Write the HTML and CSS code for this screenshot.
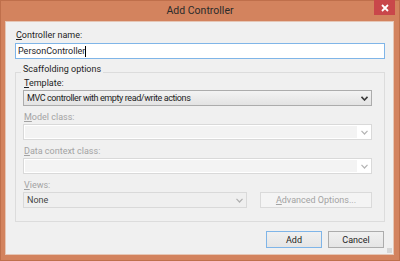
FILE: index.html
```html
<!DOCTYPE html>
<html lang="en">
  <head>
    <meta charset="UTF-8" />
    <title>Add Controller</title>
    <link rel="stylesheet" href="styles.css">
  </head>
  <body>
    <div class="window">
      <div class="titlebar">
        <span class="title">Add Controller</span>
        <span class="close">
          <svg width="8" height="8" viewBox="0 0 8 8">
            <path d="M1 1 L7 7 M7 1 L1 7" stroke="#ffffff" stroke-width="1.8" />
          </svg>
        </span>
      </div>

      <div class="client">
        <div class="label"><u>C</u>ontroller name:</div>
        <div class="textbox">PersonController<span class="caret"></span></div>

        <div class="group">
          <div class="group-title">Scaffolding options</div>

          <div class="label"><u>T</u>emplate:</div>
          <div class="combo">
            <span class="combo-text tight">MVC controller with empty read/write actions</span>
            <span class="arrow">
              <svg width="7" height="5" viewBox="0 0 7 5">
                <path d="M0.5 0.8 L3.5 4 L6.5 0.8" fill="none" stroke="#3a3a3a" stroke-width="1.6" />
              </svg>
            </span>
          </div>

          <div class="label disabled"><u>M</u>odel class:</div>
          <div class="combo off">
            <span class="combo-text"></span>
            <span class="arrow">
              <svg width="7" height="5" viewBox="0 0 7 5">
                <path d="M0.5 0.8 L3.5 4 L6.5 0.8" fill="none" stroke="#b5b5b5" stroke-width="1.2" />
              </svg>
            </span>
          </div>

          <div class="label disabled"><u>D</u>ata context class:</div>
          <div class="combo off">
            <span class="combo-text"></span>
            <span class="arrow">
              <svg width="7" height="5" viewBox="0 0 7 5">
                <path d="M0.5 0.8 L3.5 4 L6.5 0.8" fill="none" stroke="#b5b5b5" stroke-width="1.2" />
              </svg>
            </span>
          </div>

          <div class="label disabled"><u>V</u>iews:</div>
          <div class="views-row">
            <div class="combo list">
              <span class="combo-text">None</span>
              <span class="arrow">
                <svg width="7" height="5" viewBox="0 0 7 5">
                  <path d="M0.5 0.8 L3.5 4 L6.5 0.8" fill="none" stroke="#b0b0b0" stroke-width="1.2" />
                </svg>
              </span>
            </div>
            <div class="btn off"><u>A</u>dvanced Options...</div>
          </div>
        </div>

        <div class="buttons">
          <div class="btn default">Add</div>
          <div class="btn">Cancel</div>
        </div>
        <span class="grip"></span>
      </div>
    </div>
  </body>
</html>
```

FILE: styles.css
```css
body {
  margin: 0;
  padding: 0;
  width: 400px;
  height: 261px;
  overflow: hidden;
  background: #d3835e;
  font-family: Roboto, "Noto Sans", sans-serif;
  color: #1e1e1e;
}
.window {
  width: 400px;
  height: 261px;
  display: flex;
  flex-direction: column;
  box-sizing: border-box;
  border: 1px solid #bf6f4b;
}
.titlebar {
  position: relative;
  height: 20px;
  display: flex;
  align-items: center;
  justify-content: center;
}
.titlebar .title {
  font-size: 10.5px;
  color: #2b2b2b;
  margin-top: -2px;
}
.titlebar .close {
  position: absolute;
  top: -1px;
  right: 4px;
  width: 21px;
  height: 15px;
  background: #c9474a;
  display: flex;
  align-items: center;
  justify-content: center;
}
.client {
  position: relative;
  flex: 1;
  margin: 0 5px 5px 4px;
  background: #f0f0f0;
  border: 1px solid #e6c6b5;
  display: flex;
  flex-direction: column;
  padding: 7px 8px 0 9px;
  font-size: 9px;
}
.label {
  height: 12px;
  line-height: 12px;
  padding-left: 1px;
  margin-bottom: 2px;
}
.label u {
  text-decoration-thickness: 1px;
  text-underline-offset: 1px;
}
.label.disabled {
  color: #a3a3a3;
}
.textbox {
  height: 16px;
  box-sizing: border-box;
  border: 1px solid #7fb5e8;
  background: #ffffff;
  line-height: 14px;
  padding-left: 2px;
  display: flex;
  align-items: center;
}
.caret {
  display: inline-block;
  width: 1px;
  height: 11px;
  background: #000000;
}
.group {
  margin-top: 13px;
  border: 1px solid #dcdcdc;
  padding: 0 12px 13px 7px;
  display: flex;
  flex-direction: column;
}
.group .label {
  margin-bottom: 1px;
}
.group-title {
  align-self: flex-start;
  margin: -10px 0 2px -2px;
  padding: 0 2px;
  height: 12px;
  line-height: 12px;
  background: #f0f0f0;
  color: #1e1e1e;
}
.combo {
  height: 16px;
  box-sizing: border-box;
  border: 1px solid #acacac;
  background: linear-gradient(#f3f3f3, #e3e3e3);
  display: flex;
  align-items: center;
  margin-bottom: 5px;
}
.combo-text {
  flex: 1;
  padding-left: 3px;
  line-height: 14px;
}
.combo-text.tight {
  letter-spacing: -0.4px;
}
.combo .arrow {
  width: 13px;
  height: 14px;
  display: flex;
  align-items: center;
  justify-content: center;
}
.combo.off {
  border-color: #d9d9d9;
  background: #f3f3f3;
  box-shadow: inset 0 0 0 1px #ffffff;
}
.combo.off .arrow {
  background: #ffffff;
  width: 14px;
}
.combo.list {
  border-color: #d9d9d9;
  background: #efefef;
  color: #454545;
  width: 224px;
  margin-bottom: 0;
}
.views-row {
  display: flex;
  justify-content: space-between;
}
.btn {
  width: 56px;
  height: 17px;
  box-sizing: border-box;
  border: 1px solid #acacac;
  background: linear-gradient(#f0f0f0, #e5e5e5);
  display: flex;
  align-items: center;
  justify-content: center;
  color: #1e1e1e;
}
.btn.default {
  border-color: #7fb5e8;
}
.btn.off {
  width: 112px;
  height: 16px;
  border-color: #dadada;
  background: #f4f4f4;
  color: #a3a3a3;
}
.buttons {
  display: flex;
  justify-content: flex-end;
  gap: 6px;
  margin-top: 9px;
  padding-right: 1px;
}
.grip {
  position: absolute;
  right: 1px;
  bottom: 1px;
  width: 5px;
  height: 5px;
  background: radial-gradient(circle, #b8b8b8 0.6px, transparent 0.8px) 0 0 / 2px 2px;
}
```
